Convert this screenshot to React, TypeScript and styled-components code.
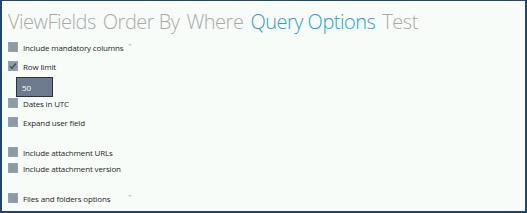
import React from "react";
import styled, { createGlobalStyle } from "styled-components";

const GlobalStyle = createGlobalStyle`
  html, body {
    margin: 0;
    padding: 0;
    background: #f7fcf9;
  }
`;

const Frame = styled.div`
  box-sizing: border-box;
  width: 527px;
  height: 213px;
  background: #f7fcf9;
  border: 1px solid #1d4670;
  border-left-width: 2px;
  border-right-width: 2px;
  border-bottom-width: 2px;
  padding: 6px 0 0 6px;
  font-family: "Open Sans", "Noto Sans", sans-serif;
  overflow: hidden;
`;

const Tabs = styled.div`
  display: flex;
  gap: 7px;
  height: 28px;
  align-items: center;
`;

const Tab = styled.span<{ $active?: boolean }>`
  font-size: 20px;
  font-weight: 300;
  letter-spacing: -0.5px;
  color: ${(p) => (p.$active ? "#2a9dd0" : "#a8aaaa")};
`;

const List = styled.div`
  display: flex;
  flex-direction: column;
  margin-top: 3px;
`;

const Row = styled.label<{ $gap?: number }>`
  display: flex;
  align-items: center;
  height: 18px;
  margin-top: ${(p) => p.$gap || 0}px;
  font-size: 8px;
  letter-spacing: -0.15px;
  color: #1e1e1e;
`;

const Text = styled.span`
  min-width: 101px;
`;

const Box = styled.span`
  box-sizing: border-box;
  width: 10px;
  height: 10px;
  background: #8e9aa5;
  border: 1px solid #95a2ad;
  margin-right: 5px;
  display: flex;
  align-items: center;
  justify-content: center;
`;

const Caret = styled.span`
  width: 0;
  height: 0;
  margin-left: 4px;
  border-left: 2px solid transparent;
  border-right: 2px solid transparent;
  border-top: 2px solid #c9cccc;
  margin-top: -4px;
`;

const Limit = styled.div`
  box-sizing: border-box;
  width: 37px;
  height: 20px;
  margin: 2px 0 0 8px;
  background: #6e7b8f;
  border: 1px solid #2a3342;
  color: #fff;
  font-size: 8px;
  display: flex;
  align-items: center;
  padding-left: 5px;
`;

const Check = () => (
  <svg width="8" height="8" viewBox="0 0 8 8">
    <path d="M1 4.2 L3 6.2 L7 1.5" fill="none" stroke="#3d4a5a" strokeWidth="1.3" />
  </svg>
);

export default function App() {
  return (
    <>
      <GlobalStyle />
      <Frame>
        <Tabs>
          <Tab>ViewFields</Tab>
          <Tab>Order By</Tab>
          <Tab>Where</Tab>
          <Tab $active>Query Options</Tab>
          <Tab>Test</Tab>
        </Tabs>
        <List>
          <Row>
            <Box />
            <Text>Include mandatory columns</Text>
            <Caret />
          </Row>
          <Row $gap={1}>
            <Box>
              <Check />
            </Box>
            <Text>Row limit</Text>
          </Row>
          <Limit>50</Limit>
          <Row $gap={-3}>
            <Box />
            <Text>Dates in UTC</Text>
          </Row>
          <Row $gap={1}>
            <Box />
            <Text>Expand user field</Text>
          </Row>
          <Row $gap={12}>
            <Box />
            <Text>Include attachment URLs</Text>
          </Row>
          <Row $gap={-2}>
            <Box />
            <Text>Include attachment version</Text>
          </Row>
          <Row $gap={12}>
            <Box />
            <Text>Files and folders options</Text>
            <Caret />
          </Row>
        </List>
      </Frame>
    </>
  );
}
